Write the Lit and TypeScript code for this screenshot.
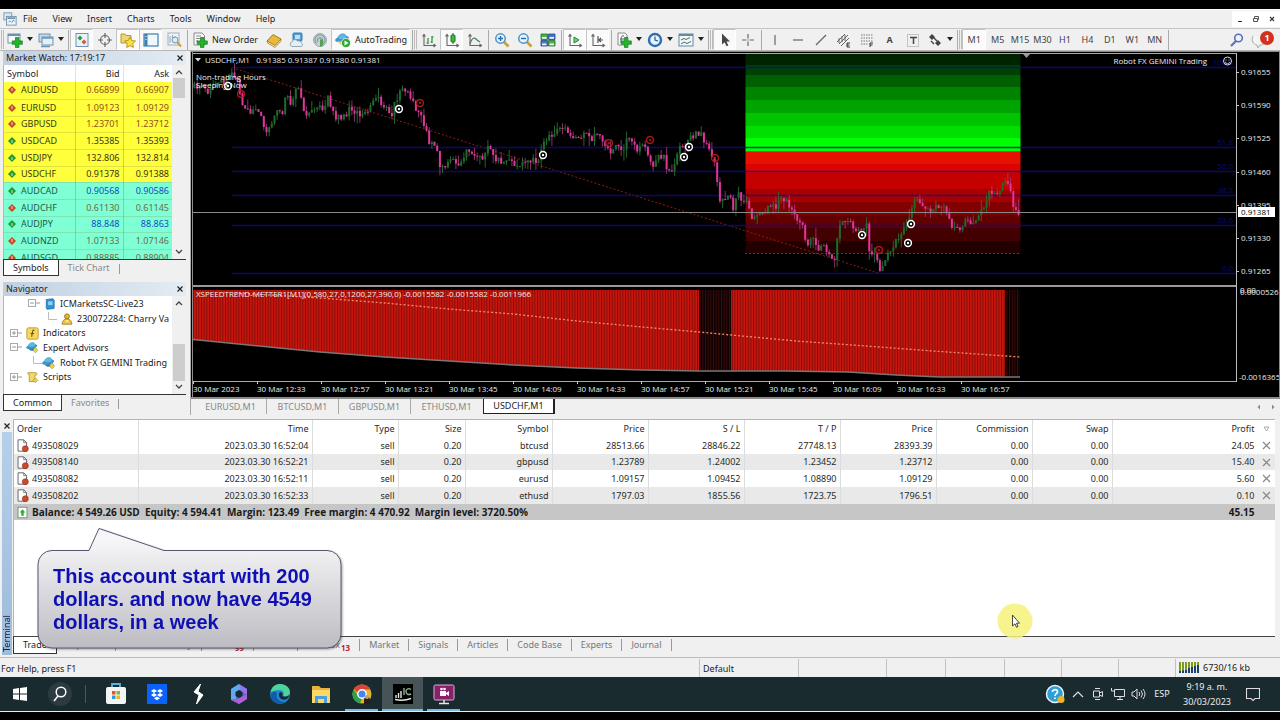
import { LitElement, html, svg, css } from "lit";
import { customElement } from "lit/decorators.js";
import { classMap } from "lit/directives/class-map.js";

const base = css`
  * { box-sizing: border-box; }
  button { font: inherit; color: inherit; background: none; border: 0; padding: 0; margin: 0; }
  svg { display: block; flex: none; }
`;

/* ---------- icons, drawn on a 16 x 16 grid ---------- */
const plus = svg`<path d="M8.5 5.5h3.4v3.4h3.4v3.4h-3.4v3.3H8.5v-3.3H5.2V8.900h3.300z" fill="#22b52b" stroke="#0c7d18" stroke-width=".7"/>`;
const axes = svg`<path d="M3 3v10.500h11M1.500 4.500 3 2.500l1.500 2M12.500 12l2 1.500-2 1.500" fill="none" stroke="#666" stroke-width="1.100"/>`;
const hat = svg`<ellipse cx="7" cy="7" rx="7" ry="2.800" transform="rotate(-12 7 7)" fill="#3c9ad0"/><path d="M3 6c0-4 7-6 8-2l.5 2c-2 2-6 2-8.500 1z" fill="#62b8e4" stroke="#2b7dae" stroke-width=".5"/><path d="M3 9c1 4 5 5 8 3l1-4c-3 2-6 2-9 1z" fill="#e8cf62"/>`;
const hatCoin = svg`<ellipse cx="7" cy="7" rx="7" ry="2.800" transform="rotate(-12 7 7)" fill="#3c9ad0"/><path d="M3 6c0-4 7-6 8-2l.5 2c-2 2-6 2-8.500 1z" fill="#62b8e4" stroke="#2b7dae" stroke-width=".5"/><path d="M3 9c1 3 4 4 7 3V8c-3 1.500-5 1.500-7 1z" fill="#3387b8"/><path d="m11.500 8 3 3.300-3 3.300-3-3.300z" fill="#ecd050" stroke="#a98b1e" stroke-width=".7"/>`;
const lens = (sign: unknown) => svg`<path d="m9.500 9.500 5 5" stroke="#c9a33a" stroke-width="2.800"/><circle cx="6.500" cy="6.500" r="4.700" fill="#e4f3fc" stroke="#4d92c8" stroke-width="1.500"/>${sign}`;

const icons: Record<string, unknown> = {
  app: svg`<rect x="1" y="1" width="9" height="8" fill="#dbe9f2" stroke="#7193ab"/><rect x="4" y="5" width="11" height="10" fill="#eef5f9" stroke="#6b8ba2"/><path d="M5 7h9" stroke="#7193ab" stroke-width="2"/><path d="m6 12 2-2 2 2 2-3 1 2" fill="none" stroke="#5b93bd"/>`,
  newChart: svg`<rect x="1" y="2" width="12" height="9" fill="#f4f9fc" stroke="#6d92ad"/><path d="M1 3h12" stroke="#6d92ad" stroke-width="2"/>${plus}`,
  profiles: svg`<rect x="1" y="2" width="11" height="8" fill="#c6dcea" stroke="#6d92ad"/><rect x="4" y="5" width="11" height="8" fill="#e4f0f7" stroke="#6d92ad"/><path d="M4 6h11M12 14.500H3" stroke="#6d92ad" stroke-width="1.500"/>`,
  market: svg`<rect x="2" y="1.500" width="12" height="13" fill="#e9f2f8" stroke="#6d92ad"/><path d="m6 3.500 2.500 2.500L6 8.500 3.500 6z" fill="#2a9b35"/><path d="M10 7.500l2.500 2.500-2.500 2.500L7.500 10z" fill="#d25a2e"/>`,
  target: svg`<circle cx="8" cy="8" r="4.500" fill="none" stroke="#666" stroke-width="1.200"/><path d="M8 1v5M8 10v5M1 8h5M10 8h5" stroke="#666" stroke-width="1.200"/>`,
  star: svg`<path d="M1 2h4l1 1.500h5V11H1z" fill="#f0d86c" stroke="#b69a35"/><path d="m10 5 1.700 3.500 3.800.5-2.800 2.600.7 3.800L10 13.600l-3.400 1.800.7-3.800L4.500 9l3.800-.5z" fill="#fbe13c" stroke="#b08d1d" stroke-width=".9"/>`,
  panel: svg`<rect x="1" y="2" width="14" height="12" fill="#f1f8fd" stroke="#3f7faf" stroke-width="1.200"/><path d="M3 2v12" stroke="#3f7faf" stroke-width="3"/><path d="M3 4v1M3 7v1" stroke="#fff"/>`,
  tester: svg`<rect x="2" y="1" width="11" height="12" fill="#eef4f8" stroke="#9bb0be"/><path d="M4 11V4M6.500 10V3M9 9V4" stroke="#89a8bc"/><circle cx="9" cy="8" r="3" fill="#d9ecf8" stroke="#7395ad"/><path d="m11 10 4 4.500" stroke="#c6a14a" stroke-width="2"/>`,
  order: svg`<path d="M2 1h8l2.500 2.500V13H2z" fill="#fafafa" stroke="#8a8a8a"/><path d="M4 4h5M4 6.500h4M4 9h2" stroke="#8a8a8a"/>${plus}`,
  book: svg`<path d="m1 9 6-6.500 8 4.500-6 7z" fill="#e9b93a" stroke="#9b6f13" stroke-width=".9"/><path d="m1 9 .5 2L9 15.500l6-6.500V7L9 13.500z" fill="#f7eac0" stroke="#9b6f13" stroke-width=".7"/>`,
  vps: svg`<rect x="4" y="1" width="9" height="8" rx="1" fill="#4f9fda" stroke="#3579ad"/><path d="M6 3h5v4H6z" fill="#bfe0f5"/><path d="M3 14.500a2.300 2.300 0 0 1 0-4.500 3 3 0 0 1 5.500-1 3 3 0 0 1 4 2 2 2 0 0 1 0 3.500z" fill="#e6eef4" stroke="#7b94a8" stroke-width=".8"/>`,
  signal: svg`<circle cx="8" cy="8" r="6.500" fill="#c9d3d6" stroke="#9aa8ad"/><path d="M4.500 11.500a5 5 0 1 1 7 0M6.200 10a2.500 2.500 0 1 1 3.600 0" fill="none" stroke="#7f9fa6" stroke-width="1.200"/><path d="M8 7.500c3-1 4.500 3 2.500 6.500L8 15z" fill="#52a356"/>`,
  auto: svg`${hat}<circle cx="11" cy="11" r="4.600" fill="#2faa32" stroke="#fff" stroke-width=".7"/><path d="m9.500 8.500 4 2.500-4 2.500z" fill="#fff"/>`,
  bars: svg`${axes}<path d="M7 6v6M5.500 11H7M11 4v7M11 5h1.500M9.500 10H11" stroke="#2b8a3a" stroke-width="1.200"/>`,
  candles: svg`${axes}<path d="M9 1v11" stroke="#186f22"/><rect x="7" y="3" width="4" height="7" rx="1" fill="#35c140" stroke="#186f22"/>`,
  line: svg`${axes}<path d="M3 12c2-7 5-7 7-4l3 2" fill="none" stroke="#557a5c" stroke-width="1.300"/>`,
  zoomIn: lens(svg`<path d="M4 6.500h5M6.500 4v5" stroke="#2c6ea8" stroke-width="1.400"/>`),
  zoomOut: lens(svg`<path d="M4 6.500h5" stroke="#2c6ea8" stroke-width="1.400"/>`),
  tile: svg`<path d="M1 2h6.500v5.500H1zM8.500 8.500H15V14H8.500z" fill="#49b04b" stroke="#28702b" stroke-width=".8"/><path d="M8.500 2H15v5.500H8.500zM1 8.500h6.500V14H1z" fill="#4377c9" stroke="#24478a" stroke-width=".8"/><path d="M2 5h4.500v1.800H2zM9.500 5H14v1.800H9.500zM2 11.500h4.500v1.800H2zM9.500 11.500H14v1.800H9.500z" fill="#f2f6fa"/>`,
  scroll: svg`${axes}<path d="m7 5 5 3-5 3z" fill="#7ad07f" stroke="#1f8b2c"/>`,
  shift: svg`${axes}<path d="M8 4v7M13 8H9M11 6 9 8l2 2" fill="none" stroke="#555" stroke-width="1.200"/>`,
  indicators: svg`<path d="M2 1h7l2 2v10H2z" fill="#fafafa" stroke="#8a8a8a"/><path d="M8 4c-3-1-3 2-3 7M4 7h4" fill="none" stroke="#557"/>${plus}`,
  clock: svg`<circle cx="8" cy="8" r="6" fill="#e8f4fd" stroke="#2b6fae" stroke-width="2.400"/><path d="M8 4.500V8l3 1" fill="none" stroke="#235a8e" stroke-width="1.200"/>`,
  template: svg`<rect x="1" y="2" width="14" height="12" fill="#f2f7fa" stroke="#5f8aa8"/><path d="M1 3h14" stroke="#5f8aa8" stroke-width="2"/><path d="m3 8 3-1.500 2 1 4-2M3 12l3-2 3 1.500 4-2" fill="none" stroke="#53695a"/>`,
  cursor: svg`<path d="M5 1.500v11l2.700-2.300 1.800 4 1.800-.8-1.800-4H13z" fill="#454545"/>`,
  cross: svg`<path d="M8 2v4.500M8 9.500V14M2 8h4.500M9.500 8H14M7.500 8h1" stroke="#666" stroke-width="1.200"/>`,
  vline: svg`<path d="M8 3v10" stroke="#666" stroke-width="1.200"/>`,
  hline: svg`<path d="M3 8h10" stroke="#666" stroke-width="1.200"/>`,
  trend: svg`<path d="m3 13 10-10" stroke="#666" stroke-width="1.200"/>`,
  channel: svg`<path d="m1 10 8-8M3 12l9-9M5 14l8-8M3 6v5M6 4v6M9 3v6" stroke="#666"/><path d="M14 11h-3v4h3M11 13h2.500" fill="none" stroke="#333"/>`,
  fibo: svg`<path d="M2 3h12M2 6h12M2 9h12M2 12h7" stroke="#777" stroke-dasharray="1.500 1"/><path d="M14 11h-3v4M11 13h2.500" fill="none" stroke="#333"/>`,
  label: svg`<rect x="2.500" y="2.500" width="11" height="12" fill="none" stroke="#999" stroke-dasharray="1 1"/><path d="M5 5.500h7M8.500 5.500V12" stroke="#444" stroke-width="1.500"/>`,
  arrows: svg`<path d="m5 2 3 3-3 3-3-3zM11 8l3 3-3 3-3-3z" fill="#444"/><path d="m4 9 3 3M6 5l4 4" stroke="#444" stroke-width="1.400"/>`,
  search: svg`<path d="m2 14 5-5" stroke="#5a6fb5" stroke-width="2.200"/><circle cx="9.500" cy="6" r="3.800" fill="#eef2ff" stroke="#5a6fb5" stroke-width="1.600"/>`,
  sheet: svg`<path d="M2.500 1h7L13 4.500V15H2.500z" fill="#fff" stroke="#666" stroke-width="1.200"/><path d="M9.500 1v3.500H13" fill="none" stroke="#666"/><circle cx="11.500" cy="12" r="3.700" fill="#cf4a2c" stroke="#8d2814" stroke-width=".7"/>`,
  deposit: svg`<rect x="2.500" y="1.500" width="11" height="13" fill="#fff" stroke="#5d8a5f"/><path d="m8 4 3.500 4h-2v4h-3V8h-2z" fill="#2eab38"/>`,
  server: svg`<path d="M3 2 12 1l1.500 2v11L4 15 3 13z" fill="#2b93d6" stroke="#1c6aa1"/><path d="M5.500 4.500h6v5h-6z" fill="#8fd0f5"/>`,
  account: svg`<circle cx="8" cy="4.500" r="3.400" fill="#e2b535" stroke="#96730f"/><path d="M1.500 15c0-5 3-7 6.500-7s6.500 2 6.500 7z" fill="#ecc548" stroke="#96730f"/><path d="M6 9.500 8 13l2-3.500" fill="#fff3c4"/>`,
  fx: svg`<rect x="1" y="1" width="14" height="14" rx="2" fill="#f6d95c" stroke="#b3922b"/><path d="M10.500 4C7.500 3 8 7 7 12M5.500 8H10" fill="none" stroke="#6e5613" stroke-width="1.400"/>`,
  expert: hatCoin,
  script: svg`<path d="M3 2h9c2 0 2 3 0 3h-1v8H4V4C2 4 1 2 3 2z" fill="#f3d968" stroke="#ae8e2b"/><path d="m11.500 8.500 3 3-3 3-3-3z" fill="#ecd050" stroke="#a98b1e" stroke-width=".8"/>`,
};
const icon = (name: string, size = 16) => html`<svg width=${size} height=${size} viewBox="0 0 16 16" aria-hidden="true">${icons[name]}</svg>`;

/* ---------- menu and toolbar ---------- */
@customElement("mt-toolbar")
class MtToolbar extends LitElement {
  static styles = [base, css`
    :host { display: block; background: #f0f0f0; }
    .menu { display: flex; align-items: center; height: 19px; padding-left: 3px; border-top: 1px solid #fff; }
    .menu nav { display: flex; gap: 15px; flex: 1; padding-left: 6px; }
    .win { display: flex; background: #fff; height: 16px; }
    .win button { width: 16px; display: grid; place-items: center; }
    .bar { display: flex; align-items: center; height: 23px; border-top: 1px solid #c6c6c6; border-bottom: 1px solid #b8b8b8; padding-left: 1px; }
    .grip { width: 3px; height: 19px; border-left: 1px solid #bbb; border-right: 1px solid #bbb; }
    .sep { width: 1px; height: 20px; margin: 0 1px 0 2px; background: #aaa; }
    .tb { width: 23px; height: 21px; display: grid; place-items: center; flex: none; }
    .on { background: #fafafa; border: 1px solid #c4c4c4; border-right-color: #fff; border-bottom-color: #fff; }
    .dd { width: 31px; height: 21px; display: flex; align-items: center; gap: 2px; padding-left: 3px; flex: none; }
    .text { height: 21px; display: flex; align-items: center; gap: 4px; padding: 0 3px; white-space: nowrap; flex: none; }
    .wide { width: 73px; }
    .auto { width: 79px; }
    .frames { display: flex; width: 204px; height: 21px; color: #444; }
    .frames button { flex: 1; }
    .letter { font-weight: 700; color: #444; }
    .push { flex: 1; }
    .alert { position: relative; width: 32px; height: 21px; }
    .badge { position: absolute; right: 6px; top: 2px; width: 14px; height: 14px; border-radius: 50%; background: #d0321f; color: #fff; font-weight: 700; line-height: 14px; text-align: center; }
  `];
  b(name: string, label: string, on = false) {
    return html`<button class=${classMap({ tb: true, on })} aria-label=${label}>${icon(name)}</button>`;
  }
  d(name: string, label: string) {
    return html`<button class="dd" aria-label=${label}>${icon(name)}<svg width="9" height="5" viewBox="0 0 9 5"><path d="M2 0h6L5 4z" fill="#222"/></svg></button>`;
  }
  render() {
    const grip = html`<span class="grip"></span>`;
    const sep = html`<span class="sep"></span>`;
    return html`
      <div class="menu">${icon("app", 14)}
        <nav>${["File", "View", "Insert", "Charts", "Tools", "Window", "Help"].map((m) => html`<button>${m}</button>`)}</nav>
        <div class="win">
          <button aria-label="Minimize"><svg width="8" height="8"><path d="M2 6.500h4" stroke="#333"/></svg></button>
          <button aria-label="Restore"><svg width="8" height="8"><path d="M2.500 3V1.500h4v3H5M1.500 3.500h4v3h-4z" fill="none" stroke="#555"/></svg></button>
          <button aria-label="Close"><svg width="8" height="8"><path d="m2 2 4 4M6 2 2 6" stroke="#333" stroke-width="1.200"/></svg></button>
        </div>
      </div>
      <div class="bar">${grip}
        ${this.d("newChart", "New chart")}${this.d("profiles", "Profiles")}${sep}
        ${this.b("market", "Market Watch", true)}${this.b("target", "Data Window")}${this.b("star", "Navigator", true)}${this.b("panel", "Terminal", true)}${this.b("tester", "Strategy Tester")}${sep}
        <button class="text wide">${icon("order")}New Order</button>
        ${this.b("book", "MetaEditor")}${this.b("vps", "Virtual hosting")}${this.b("signal", "Signals")}
        <button class="text auto on">${icon("auto")}AutoTrading</button>${sep}${grip}
        ${this.b("bars", "Bar chart")}${this.b("candles", "Candlesticks", true)}${this.b("line", "Line chart")}${sep}
        ${this.b("zoomIn", "Zoom in")}${this.b("zoomOut", "Zoom out")}${this.b("tile", "Tile windows")}${sep}
        ${this.b("scroll", "Auto scroll", true)}${this.b("shift", "Chart shift", true)}${sep}
        ${this.d("indicators", "Indicators")}${this.d("clock", "Periods")}${this.d("template", "Templates")}${sep}${grip}
        ${this.b("cursor", "Cursor", true)}${this.b("cross", "Crosshair")}${sep}
        ${this.b("vline", "Vertical line")}${this.b("hline", "Horizontal line")}${this.b("trend", "Trendline")}${this.b("channel", "Channel")}${this.b("fibo", "Fibonacci")}
        <button class="tb letter">A</button>${this.b("label", "Text label")}${this.d("arrows", "Arrows")}${sep}${grip}
        <div class="frames">${["M1", "M5", "M15", "M30", "H1", "H4", "D1", "W1", "MN"].map((f, i) => html`<button class=${i ? "" : "on"}>${f}</button>`)}</div>${sep}
        <span class="push"></span>
        ${this.b("search", "Search")}
        <button class="alert" aria-label="Notifications"><svg width="20" height="21"><path d="M5 7c-2 5 0 8 4 9l1 3 2-3c4 0 6-3 6-6" fill="#f4f4f4" stroke="#aaa"/></svg><span class="badge">1</span></button>
      </div>`;
  }
}

/* ---------- left dock ---------- */
type Quote = [string, string, string, "up" | "down", "dark" | "blue" | "brown"];
const quotes: Quote[] = [
  ["AUDUSD", "0.66899", "0.66907", "down", "brown"],
  ["EURUSD", "1.09123", "1.09129", "down", "brown"],
  ["GBPUSD", "1.23701", "1.23712", "down", "brown"],
  ["USDCAD", "1.35385", "1.35393", "up", "dark"],
  ["USDJPY", "132.806", "132.814", "up", "dark"],
  ["USDCHF", "0.91378", "0.91388", "up", "dark"],
  ["AUDCAD", "0.90568", "0.90586", "up", "blue"],
  ["AUDCHF", "0.61130", "0.61145", "down", "brown"],
  ["AUDJPY", "88.848", "88.863", "up", "blue"],
  ["AUDNZD", "1.07133", "1.07146", "down", "brown"],
  ["AUDSGD", "0.88885", "0.88904", "down", "brown"],
];
const chevron = (up: boolean) => html`<svg width="8" height="6" viewBox="0 0 8 6"><path d=${up ? "m1 5 3-3 3 3" : "m1 1 3 3 3-3"} fill="none" stroke="#444" stroke-width="1.300"/></svg>`;
const closeX = html`<svg width="6" height="6" viewBox="0 0 6 6"><path d="m.5.5 5 5M5.500.5l-5 5" stroke="#222" stroke-width="1.200"/></svg>`;

@customElement("mt-dock")
class MtDock extends LitElement {
  static styles = [base, css`
    :host { display: flex; box-sizing: border-box; flex-direction: column; width: 191px; flex: none; background: #f0f0f0; padding: 0 4px 0 3px; border-right: 1px solid #aaa; }
    .title { display: flex; align-items: center; justify-content: space-between; height: 14px; padding: 0 1px 0 3px; background: linear-gradient(90deg, #bfd0e2, #e4ecf3); white-space: nowrap; }
    .title button { display: grid; place-items: center; width: 10px; height: 12px; }
    .second { margin-top: 5px; }
    .pane { display: flex; border: 1px solid #b5b5b5; border-width: 0 0 0 1px; background: #fff; overflow: hidden; }
    .quotes { height: 194px; }
    .tree { height: 98px; }
    .body { flex: 1; min-width: 0; overflow: hidden; }
    .bar { width: 14px; background: #f0f0f0; display: flex; flex-direction: column; align-items: center; padding: 4px 0; }
    .thumb { width: 12px; background: #cdcdcd; }
    .t1 { height: 20px; margin: 3px 0 auto; }
    .t2 { height: 37px; margin: auto 0 3px; }
    table { border-collapse: collapse; table-layout: fixed; width: 100%; line-height: 14px; }
    tr { height: 17px; }
    tbody tr:nth-child(3n) { height: 16px; }
    th { font-weight: 400; border-right: 1px solid #e2e2e2; text-align: right; padding: 0 3px; }
    th:first-child { text-align: left; }
    th:last-child { border: 0; }
    td { padding: 0 3px; text-align: right; border-right: 1px solid rgba(120, 130, 60, .35); border-bottom: 1px solid rgba(120, 130, 60, .22); }
    td:first-child { text-align: left; padding-left: 4px; color: #333a10; }
    td:last-child { border-right: 0; }
    .s { width: 71px; }
    .q { width: 48px; }
    .major { background: #ffff3c; }
    .cross { background: #7fffd4; }
    .cross td:first-child { color: #1d5a48; }
    .dark { color: #3a3412; }
    .brown { color: #96501e; }
    .cross .brown { color: #6d6a4a; }
    .blue { color: #0a50c8; }
    .sym { display: flex; align-items: center; gap: 5px; }
    .tabs { display: flex; height: 18px; border-top: 1px solid #333; }
    .tab { height: 16px; padding: 0 9px; color: #888; }
    .tabs .cur { background: #fff; color: #222; border: solid #333; border-width: 0 1px 1px; }
    .mark { width: 1px; height: 10px; margin-top: 4px; background: #999; }
    ul { list-style: none; margin: 0; padding: 0; }
    .tree li { display: flex; align-items: center; height: 15px; white-space: nowrap; gap: 4px; }
    .tree li:nth-child(3n) { height: 14px; }
    .d1 { padding-left: 6px; }
    .d2 { padding-left: 24px; }
    .d3 { padding-left: 40px; }
    .leaf { padding-left: 25px; }
    .leaf svg:first-child { margin-right: -4px; }
  `];
  box(open: boolean) {
    return html`<svg width="12" height="9" viewBox="0 0 12 9"><rect x=".5" y=".5" width="7" height="7" fill="#fff" stroke="#aaa"/><path d=${open ? "M2 4h4M8 4h4" : "M2 4h4M4 2v4M8 4h4"} stroke="#999"/></svg>`;
  }
  elbow() {
    return html`<svg width="13" height="14" viewBox="0 0 13 14"><path d="M4.500 0v7.500H13" fill="none" stroke="#bbb"/></svg>`;
  }
  render() {
    return html`
      <div class="title"><span>Market Watch: 17:19:17</span><button aria-label="Close Market Watch">${closeX}</button></div>
      <div class="pane quotes">
        <div class="body"><table>
          <colgroup><col class="s"><col class="q"><col></colgroup>
          <thead><tr><th>Symbol</th><th>Bid</th><th>Ask</th></tr></thead>
          <tbody>${quotes.map(([s, b, a, dir, tone], i) => html`<tr class=${i < 6 ? "major" : "cross"}>
            <td><span class="sym"><svg width="8" height="8" viewBox="0 0 8 8"><path d="m4 0 4 4-4 4-4-4z" fill=${dir === "up" ? "#1f9a2e" : "#c9481f"}/><path d=${dir === "up" ? "M4 6V3" : "M4 2v3"} stroke="#fff" stroke-opacity=".8"/></svg>${s}</span></td>
            <td class=${tone}>${b}</td><td class=${tone}>${a}</td></tr>`)}</tbody>
        </table></div>
        <div class="bar">${chevron(true)}<div class="thumb t1"></div>${chevron(false)}</div>
      </div>
      <div class="tabs"><button class="tab cur">Symbols</button><button class="tab">Tick Chart</button><span class="mark"></span></div>
      <div class="title second"><span>Navigator</span><button aria-label="Close Navigator">${closeX}</button></div>
      <div class="pane tree">
        <div class="body"><ul>
          <li class="d2">${this.box(true)}${icon("server", 12)}ICMarketsSC-Live23</li>
          <li class="d3">${this.elbow()}${icon("account", 12)}230072284: Charry Va</li>
          <li class="d1">${this.box(false)}${icon("fx", 13)}Indicators</li>
          <li class="d1">${this.box(true)}${icon("expert", 13)}Expert Advisors</li>
          <li class="leaf">${this.elbow()}${icon("expert", 14)}Robot FX GEMINI Trading</li>
          <li class="d1">${this.box(false)}${icon("script", 13)}Scripts</li>
        </ul></div>
        <div class="bar">${chevron(true)}<div class="thumb t2"></div>${chevron(false)}</div>
      </div>
      <div class="tabs"><button class="tab cur">Common</button><button class="tab">Favorites</button><span class="mark"></span></div>`;
  }
}

/* ---------- chart window ---------- */
const OX = 193;
const OY = 52;
const path = [
  194,88,200,86,205,92,212,87,220,84,228,80,233,70,237,82,242,100,246,112,252,112,258,110,262,122,264,131,269,132,273,115,279,106,281,124,286,95,290,102,295,95,299,84,303,106,308,116,314,112,319,102,324,108,328,99,331,112,336,118,344,116,351,108,358,114,363,110,370,107,374,98,380,101,386,110,392,114,397,98,404,88,409,92,414,106,420,110,425,130,430,144,436,148,440,165,446,164,452,162,460,165,465,152,475,155,482,158,488,148,496,160,505,162,514,164,524,162,532,158,538,160,542,142,547,138,555,134,563,129,570,136,577,134,590,138,600,136,604,140,610,152,616,147,622,149,628,139,634,148,644,148,648,156,652,168,658,158,664,155,668,172,674,165,679,150,684,145,690,140,695,132,700,132,705,142,712,158,716,168,720,202,726,203,730,196,734,216,737,182,741,203,745,200,749,210,753,221,760,214,768,209,776,205,784,198,790,210,796,216,803,228,807,247,813,240,818,250,823,245,828,252,834,268,838,235,842,222,848,218,854,226,860,232,867,225,870,255,876,255,880,270,886,255,892,245,900,235,908,225,914,200,918,202,925,208,932,212,940,204,948,212,952,224,960,226,968,220,975,222,982,212,986,198,992,190,996,196,1002,186,1007,178,1010,188,1013,210,1021,212,
];
function priceAt(x: number) {
  let i = 0;
  while (i < path.length - 4 && path[i + 2] < x) i += 2;
  const t = Math.min(1, Math.max(0, (x - path[i]) / (path[i + 2] - path[i])));
  return path[i + 1] + (path[i + 3] - path[i + 1]) * t;
}
function candles() {
  let seed = 17;
  const rnd = () => (seed = (seed * 16807) % 2147483647) / 2147483647;
  let open = priceAt(194);
  let upBody = "", downBody = "", upWick = "", downWick = "";
  for (let n = 0; n < 310; n++) {
    const x = 194.500 + n * 2.667;
    const close = priceAt(x) + (rnd() - 0.5) * 8;
    const top = Math.min(open, close), h = Math.max(1, Math.abs(open - close));
    const wt = top - rnd() * rnd() * 11, wb = top + h + rnd() * rnd() * 11;
    const body = `M${(x - 1).toFixed(1)} ${top.toFixed(1)}h2v${h.toFixed(1)}h-2z`;
    const wick = `M${x.toFixed(1)} ${wt.toFixed(1)}V${wb.toFixed(1)}`;
    if (close < open) { upBody += body; upWick += wick; } else { downBody += body; downWick += wick; }
    open = close;
  }
  return svg`<path d=${upWick} stroke="#2c7a3a" stroke-width=".8"/><path d=${downWick} stroke="#a83a80" stroke-width=".8"/><path d=${upBody} fill="#1d6b2a"/><path d=${downBody} fill="#e2359c"/>`;
}
const greens = [[54, "#002400"], [65, "#004000"], [75, "#006000"], [87, "#008400"], [100, "#00a400"], [113, "#00c400"], [126, "#00e000"], [138, "#00ff00"], [151, "#3a5a20"]] as const;
const reds = [[152, "#e61200"], [164, "#dc0400"], [173, "#c40000"], [189, "#a60000"], [202, "#820000"], [215, "#600000"], [228, "#420000"], [241, "#220000"], [254, "#000"]] as const;
const bands = (list: readonly (readonly [number, string])[]) =>
  list.slice(0, -1).map(([y, c], i) => svg`<rect x="745.500" y=${y} width="275" height=${list[i + 1][0] - y} fill=${c}/>`);
const fibs: [number, string][] = [[67, "100.0"], [147, "61.8"], [171, "50.0"], [195, "38.2"], [225, "23.6"], [273, "0.0"]];
const whiteMarks = [[228, 86], [399, 109], [543, 155], [684, 157], [689, 147], [862, 235], [908, 243], [911, 224]];
const redMarks = [[241, 94], [420, 103], [609, 143], [650, 140], [715, 158], [879, 250]];
const floor = "339.500 320 352 385 357 449 361 513 365 577 368 642 370 699 371 785 371 848 372 896 375 940 377 1020 377";
const times = ["30 Mar 2023", "30 Mar 12:33", "30 Mar 12:57", "30 Mar 13:21", "30 Mar 13:45", "30 Mar 14:09", "30 Mar 14:33", "30 Mar 14:57", "30 Mar 15:21", "30 Mar 15:45", "30 Mar 16:09", "30 Mar 16:33", "30 Mar 16:57"];
const prices: [number, string][] = [[72, "0.91655"], [105, "0.91590"], [138, "0.91525"], [172, "0.91460"], [205, "0.91395"], [238, "0.91330"], [271, "0.91265"]];

@customElement("mt-chart")
class MtChart extends LitElement {
  static styles = [base, css`
    :host { display: flex; flex-direction: column; flex: 1; min-width: 0; background: #f0f0f0; }
    .frame { display: flex; background: #000; border: solid #8c8c8c; border-width: 1px 1px 2px 0; padding-left: 1px; }
    .plot { flex: 1; min-width: 0; height: 345px; border-left: 1px solid #8f8f8f; }
    .axis { width: 42px; height: 345px; }
    .frame svg { width: 100%; height: 345px; font: 8px "Open Sans", "Noto Sans", sans-serif; fill: #ececec; }
    .frame .fib { fill: #0c0c70; }
    .frame .now { fill: #000; }
    .tabs { display: flex; height: 16px; color: #888; padding-left: 4px; }
    .tab { width: 72px; margin-bottom: 1px; border-right: 1px solid #aaa; }
    .list { display: flex; flex: 1; }
    .tabs .last { border-color: transparent; }
    .tabs .cur { background: #fff; color: #222; border: solid #222; border-width: 0 2px 1px 1px; }
    .nav { display: flex; gap: 8px; align-items: center; padding-right: 4px; }
  `];
  render() {
    const area = `M193 290L193 ${floor}L1020 290z`;
    return html`
      <div class="frame">
        <div class="plot"><svg role="img" aria-label="USDCHF one minute chart">
          <defs>
            <pattern id="hist" x="193" width="2.667" height="10" patternUnits="userSpaceOnUse"><rect width="2.667" height="10" fill="#c8170f"/><rect width="1" height="10" fill="#860a04"/></pattern>
            <pattern id="dim" x="193" width="2.667" height="10" patternUnits="userSpaceOnUse"><rect width="2.667" height="10" fill="#0c0101"/><rect width="1" height="10" fill="#3c0c0a"/></pattern>
            <clipPath id="area"><path d=${area}/></clipPath>
          </defs>
          <g transform="translate(${-OX} ${-OY})">
            <path d="M193 53.500H2400" stroke="#aaa"/>
            ${bands(greens)}${bands(reds)}
            <rect x="745.500" y="151" width="275" height="1" fill="#5d7a3c"/>
            <path d="M745 253.500h275" stroke="#a01c10" stroke-dasharray="2 2"/>
            <path d="M236 69 878 273" stroke="#8c1f14" stroke-dasharray="2 2"/>
            ${fibs.map(([y]) => svg`<path d="M232 ${y}.500H2400" stroke="#0a0a90" stroke-opacity=".8" stroke-width="1.500"/>`)}
            ${candles()}
            <path d="M193 212.500H2400" stroke="#8a8a8a"/>
            ${redMarks.map(([x, y]) => svg`<circle cx=${x} cy=${y} r="3.400" fill="none" stroke="#c01818" stroke-width="1.200"/><circle cx=${x} cy=${y} r="1" fill="#c01818"/>`)}
            ${whiteMarks.map(([x, y]) => svg`<circle cx=${x} cy=${y} r="3.400" fill="#000" stroke="#fff" stroke-width="1.500"/><circle cx=${x} cy=${y} r="1.200" fill="#fff"/>`)}
            <path d="M1023 54h7l-3.500 4z" fill="#999"/>
            <rect x="193" y="285" width="100%" height="2" fill="#9a9a9a"/>
            <g clip-path="url(#area)">
              <rect x="193" y="290" width="813" height="90" fill="url(#hist)"/>
              <rect x="699" y="290" width="32" height="90" fill="#000"/><rect x="699" y="290" width="32" height="90" fill="url(#dim)"/>
              <rect x="1005" y="290" width="15" height="90" fill="url(#dim)"/>
            </g>
            <path d="M193 ${floor}" fill="none" stroke="#7d7474" stroke-width="1.500"/>
            <path d="M236 293 320 298 385 303 449 309 513 314 577 321 642 327 699 332 731 335 796 341 866 346 933 351 1020 357" fill="none" stroke="#f08c6c" stroke-width="1.300" stroke-dasharray="2 2"/>
            <path d="M193 381.500H2400" stroke="#aaa"/>
            ${times.map((t, i) => svg`<path d="M${193.500 + i * 64} 381v3" stroke="#ccc"/><text x=${193 + i * 64} y="392">${t}</text>`)}
            <path d="M195 58h6l-3 3.500z" fill="#ddd"/>
            <text x="205" y="63">USDCHF,M1&#160;&#160; 0.91385 0.91387 0.91380 0.91381</text>
            <text x="196" y="80">Non-trading Hours</text>
            <text x="196" y="88">Sleeping Now</text>
            <text x="196" y="297">XSPEEDTREND-METTER1[M1](0,580,27,0,1200,27,390,0) -0.0015582 -0.0015582 -0.0011966</text>
          </g>
          <svg x="100%" overflow="visible">
            <g transform="translate(-1 ${-OY})">
              <path d="M0.500 53V382" stroke="#bbb"/>
              ${fibs.map(([y, t]) => svg`<text class="fib" x="-3" y=${y - 2} text-anchor="end">${t}</text>`)}
              <text x="-29" y="64" text-anchor="end">Robot FX GEMINI Trading</text>
              <circle cx="-8.500" cy="61" r="4" fill="none" stroke="#ddd"/><path d="M-11 62.500q2.500 2.500 5 0M-10 59.500v1M-7 59.500v1" fill="none" stroke="#ddd" stroke-width=".9"/>
            </g>
          </svg>
        </svg></div>
        <div class="axis"><svg>
          <g transform="translate(0 ${-OY})">
            ${prices.map(([y, t]) => svg`<path d="M0 ${y}.500h2" stroke="#ccc"/><text x="4" y=${y + 3}>${t}</text>`)}
            <rect x="1" y="207" width="37" height="10" fill="#fff"/><text class="now" x="4" y="215">0.91381</text>
            <text x="3" y="293">0.00</text><text x="3" y="295">0.0000526</text><text x="2" y="380">-0.0016365</text>
          </g>
        </svg></div>
      </div>
      <div class="tabs">
        <div class="list">
          ${["EURUSD,M1", "BTCUSD,M1", "GBPUSD,M1", "ETHUSD,M1"].map((t, i) => html`<button class=${classMap({ tab: true, last: i === 3 })}>${t}</button>`)}
          <button class="tab cur">USDCHF,M1</button>
        </div>
        <div class="nav"><svg width="6" height="6"><path d="M4 .5 1.500 3 4 5.500z" fill="#888"/></svg><svg width="6" height="6"><path d="M2 .5 4.500 3 2 5.500z" fill="#888"/></svg></div>
      </div>`;
  }
}

/* ---------- terminal ---------- */
const orders = [
  ["493508029", "2023.03.30 16:52:04", "sell", "0.20", "btcusd", "28513.66", "28846.22", "27748.13", "28393.39", "0.00", "0.00", "24.05"],
  ["493508140", "2023.03.30 16:52:21", "sell", "0.20", "gbpusd", "1.23789", "1.24002", "1.23452", "1.23712", "0.00", "0.00", "15.40"],
  ["493508082", "2023.03.30 16:52:11", "sell", "0.20", "eurusd", "1.09157", "1.09452", "1.08890", "1.09129", "0.00", "0.00", "5.60"],
  ["493508202", "2023.03.30 16:52:33", "sell", "0.20", "ethusd", "1797.03", "1855.56", "1723.75", "1796.51", "0.00", "0.00", "0.10"],
];
const heads = ["Order", "Time", "Type", "Size", "Symbol", "Price", "S / L", "T / P", "Price", "Commission", "Swap", "Profit"];
const summary = ["Balance: 4 549.26 USD", "Equity: 4 594.41", "Margin: 123.49", "Free margin: 4 470.92", "Margin level: 3720.50%"].join("\u00a0 ");

@customElement("mt-terminal")
class MtTerminal extends LitElement {
  static styles = [base, css`
    :host { display: flex; box-sizing: border-box; position: relative; flex: 1; min-height: 0; background: #f0f0f0; padding: 1px 5px 2px 0; border-bottom: 1px solid #bbb; }
    .side { width: 13px; padding: 3px 1px 0 2px; display: flex; flex-direction: column; align-items: center; gap: 2px; }
    .side button { width: 10px; height: 8px; display: grid; place-items: center; }
    .strip { flex: 1; width: 10px; background: linear-gradient(#9dbcdb, #b4d0ea); display: flex; align-items: center; justify-content: flex-start; writing-mode: vertical-rl; transform: rotate(180deg); line-height: 10px; padding-top: 3px; color: #223; }
    .main { flex: 1; min-width: 0; display: flex; flex-direction: column; }
    .list { flex: 1; background: #fff; border: solid #b5b5b5; border-width: 1px 0 0 1px; }
    table { width: 100%; border-collapse: collapse; table-layout: fixed; line-height: 14px; color: #2a2a2a; }
    tr { height: 17px; }
    tbody tr:nth-child(3n + 2) { height: 16px; }
    th { font-weight: 400; }
    th, td { text-align: right; padding: 0 3px; border-right: 1px solid #dcdcdc; white-space: nowrap; }
    th:first-child, td:first-child { text-align: left; }
    th:nth-last-child(-n + 2), td:nth-last-child(-n + 2) { border-right: 0; }
    tbody td:first-child { padding-left: 2px; }
    tbody tr:nth-child(even) { background: #e9e9e9; }
    tbody .sum { background: #c6c6c6; font: 700 10px/14px "Open Sans", sans-serif; color: #1a1a1a; }
    .sum td { border: 0; }
    .cell { display: flex; align-items: center; gap: 3px; }
    .w125 { width: 124px; } .w174 { width: 174px; } .w86 { width: 86px; } .w67 { width: 67px; } .w87 { width: 87px; } .w96 { width: 96px; } .w80 { width: 80px; } .w17 { width: 17px; }
    .x { padding: 0 4px; }
    .x button { display: block; margin: auto; }
    .x svg { margin: auto; }
    .tabs { display: flex; height: 19px; border-top: 1px solid #444; color: #777; }
    .tab { display: flex; align-items: center; padding: 0 9px; height: 16px; white-space: nowrap; border-left: 1px solid transparent; border-image: linear-gradient(transparent 15%, #999 15%, #999 85%, transparent 85%) 1; border-width: 0 0 0 1px; }
    .tabs .cur { background: #fff; color: #222; border: solid #333; border-width: 0 1px 1px; border-image: none; height: 17px; }
    .cur + .tab { border-image: none; }
    .end { width: 1px; height: 12px; margin-top: 2px; background: #999; }
    .n { color: #c01f2b; font-size: 8px; padding: 5px 0 0 1px; font-weight: 700; }
    .callout { position: absolute; left: 37px; bottom: 8px; width: 305px; filter: drop-shadow(1px 1px 1px rgba(0, 0, 0, .35)); }
    .callout p { position: absolute; inset: 37px 14px auto 16px; margin: 0; font: 700 20px/23px "Liberation Sans", Arial, sans-serif; color: #0f10b4; }
    .halo { position: absolute; right: 246px; bottom: 17px; }
  `];
  render() {
    const cols = ["w125", "w174", "w86", "w67", "w87", "w96", "w96", "w96", "w96", "w96", "w80", "", "w17"];
    return html`
      <div class="side"><button aria-label="Close Terminal">${closeX}</button><div class="strip">Terminal</div></div>
      <div class="main">
        <div class="list"><table>
          <colgroup>${cols.map((c) => html`<col class=${c}>`)}</colgroup>
          <thead><tr>${heads.map((h) => html`<th>${h}</th>`)}<th class="x"><svg width="7" height="6"><path d="M1 1h5L3.500 5z" fill="none" stroke="#999" stroke-width=".8"/></svg></th></tr></thead>
          <tbody>
            ${orders.map(([id, ...rest]) => html`<tr><td><span class="cell">${icon("sheet", 13)}${id}</span></td>${rest.map((v) => html`<td>${v}</td>`)}
              <td class="x"><button aria-label="Close order ${id}"><svg width="9" height="9"><path d="m1 1 7 7M8 1 1 8" stroke="#888" stroke-width="1.200"/></svg></button></td></tr>`)}
            <tr class="sum"><td colspan="11"><span class="cell">${icon("deposit", 13)}${summary}</span></td><td>45.15</td><td></td></tr>
          </tbody>
        </table></div>
        <div class="tabs">
          <button class="tab cur">Trade</button>
          <button class="tab">Exposure</button>
          <button class="tab">Account History</button>
          <button class="tab">News<span class="n">99</span></button>
          <button class="tab">Alerts</button>
          <button class="tab">Mailbox<span class="n">13</span></button>
          ${["Market", "Signals", "Articles", "Code Base", "Experts", "Journal"].map((t) => html`<button class="tab">${t}</button>`)}
          <span class="end"></span>
        </div>
      </div>
      <div class="callout">
        <svg width="305" height="121" viewBox="0 0 305 121">
          <defs><linearGradient id="g" x2="0" y2="1"><stop offset=".1" stop-color="#f6f6f8"/><stop offset="1" stop-color="#bcbcc2"/></linearGradient></defs>
          <path d="M15 22.500H52L62 .5 127 22.500H290a14 14 0 0 1 14 14V106a14 14 0 0 1-14 14H15a14 14 0 0 1-14-14V36.500a14 14 0 0 1 14-14z" fill="url(#g)" stroke="#555a70"/>
        </svg>
        <p>This account start with 200 dollars. and now have 4549 dollars, in a week</p>
      </div>
      <svg class="halo" width="38" height="38" viewBox="0 0 38 38"><circle cx="19" cy="19" r="17.500" fill="#f6f27a" fill-opacity=".85"/><path d="M16.500 13v11l2.500-2.200 1.500 3.500 1.500-.7-1.500-3.400h3z" fill="#fff" stroke="#333" stroke-width=".9"/></svg>`;
  }
}

/* ---------- Windows taskbar ---------- */
const apps: [string, unknown, string][] = [
  ["Microsoft Store", svg`<path d="M9 7V3h8v4" fill="none" stroke="#58b0e0" stroke-width="1.800"/><rect x="3" y="6" width="20" height="17" rx="2" fill="#f4f4f4"/><path d="M9 10h3.500v3.500H9z" fill="#e8532c"/><path d="M13.500 10H17v3.500h-3.500z" fill="#7eb83b"/><path d="M9 14.500h3.500V18H9z" fill="#2a9ddf"/><path d="M13.500 14.500H17V18h-3.500z" fill="#f3b51f"/>`, ""],
  ["Dropbox", svg`<rect x="3" y="3" width="20" height="20" fill="#0a62fb"/><path d="m10 8 3 2-3 2-3-2zM16 8l3 2-3 2-3-2zM10 12l3 2-3 2-3-2zM16 12l3 2-3 2-3-2zM13 15.500l3 1.700-3 2-3-2z" fill="#fff"/>`, ""],
  ["Strategy", svg`<path d="M15.500 3 9 11l5 3-2.500 9L18 14l-5-3.500z" fill="#fff" stroke="#fff" stroke-linejoin="round"/>`, ""],
  ["Microsoft 365", svg`<path d="m13 3 8 5v10l-8 5-8-5V8z" fill="#4a6fd8"/><path d="m13 3 8 5v5l-6-2-2-8z" fill="#9a6fe8"/><path d="m5 8 8-5 2 5-5 3v7l-5 1z" fill="#5fa9ee"/><path d="m21 13v5l-8 5-8-4 7-1z" fill="#b05fd0"/><path d="m13 9 3.500 2v4L13 17l-3.500-2v-4z" fill="#1b2a2e"/>`, ""],
  ["Edge", svg`<circle cx="13" cy="13" r="10" fill="#1d87d6"/><path d="M3.500 11C5 5 9 3 13 3c6 0 10 4 10 8 0 3-3 5-7 4 2-3 0-6-4-6-3 0-6 1-8.500 2z" fill="#4fd39a"/><path d="M10 12c-2 6 3 9 8 9-5 4-14 1-14.500-7C5 10 9 10 10 12z" fill="#125ba8"/><path d="M12.500 11.500c2-1 4 1 3 3.500 2 1.500 5 .5 7-1-1 4-4 5.500-7 4.500-3-1-4.500-4-3-7z" fill="#1a2b2f"/>`, ""],
  ["File Explorer", svg`<path d="M4 5h7l2 2h9v15H4z" fill="#e9b23a"/><path d="M4 9h18v13H4z" fill="#fbd767"/><path d="M7 22v-7h12v7h-3v-4h-6v4z" fill="#4a9fdc"/>`, ""],
  ["Chrome", svg`<circle cx="13" cy="13" r="9.500" fill="#e3b52a"/><path d="M13 3.500a9.500 9.500 0 0 1 8.500 5H13L9 12 5 8a9.500 9.500 0 0 1 8-4.500z" fill="#db4437"/><path d="M4.700 8.300 9 15l4 2.500-2 5A9.500 9.500 0 0 1 4.700 8.300z" fill="#2da14c"/><circle cx="13" cy="13" r="4.200" fill="#4285f4" stroke="#fff" stroke-width="1.400"/><path d="M15 23v-4a3 3 0 1 1 6 0v4z" fill="#2a1e18"/><circle cx="18" cy="16" r="2" fill="#c99a72"/>`, "run"],
  ["IC Markets", svg`<rect x="3" y="3" width="20" height="20" fill="#000"/><path d="M6 17v-3M8.500 17v-5M11 17v-7M5 18.500c5 1 11 1 16-1" fill="none" stroke="#dfe6df" stroke-width="1.400"/><path d="M14 7v7M21 8.500c-3-2-5 0-5 2s2 4 5 2.500" fill="none" stroke="#8fb58f" stroke-width="1.400"/>`, "active"],
  ["Recorder", svg`<rect x="3" y="4" width="20" height="15" rx="1.500" fill="#8a1f6b" stroke="#d7b7cf"/><path d="M9 10h6v5H9zM15 12l3-2v5l-3-2z" fill="#fff"/><circle cx="10.500" cy="8" r="1.300" fill="#fff"/><circle cx="13.500" cy="8" r="1.300" fill="#fff"/><path d="M13 19v3M8 22.500h10" stroke="#e8e8e8" stroke-width="1.500"/>`, "run"],
];

@customElement("win-taskbar")
class WinTaskbar extends LitElement {
  static styles = [base, css`
    :host { display: flex; box-sizing: border-box; height: 35px; background: #1a2b2f; color: #eee; border-bottom: 1px solid #e8eeee; align-items: stretch; }
    button { display: grid; place-items: center; }
    .apps { display: flex; }
    .start, .find { width: 40px; }
    .sep { width: 1px; margin: 8px 9px 8px 5px; background: #4a595d; }
    .app { width: 41px; }
    .app.run { box-shadow: inset 0 -2px #7fb6dc; width: 33px; margin: 0 4px; }
    .active { background: #465458; box-shadow: inset 0 -2px #7fb6dc; }
    .grow { flex: 1; }
    .tray { display: flex; align-items: center; }
    .tray button { width: 20px; }
    .tray .lang { width: 28px; }
    .tray .clock { display: block; width: 62px; line-height: 15px; text-align: center; }
    .tray .note { width: 30px; margin: 0 12px 0 0; }
    .tray .help { width: 26px; }
  `];
  render() {
    return html`
      <button class="start" aria-label="Start"><svg width="14" height="14"><path d="m0 2 6-.9v5.400H0zM7 1l7-1v6.500H7zM0 7.500h6v5.400L0 12zM7 7.500h7V14l-7-1z" fill="#fff"/></svg></button>
      <button class="find" aria-label="Search"><svg width="26" height="26"><circle cx="13" cy="13" r="12" fill="#2c3b3f"/><circle cx="14" cy="11" r="4.800" fill="none" stroke="#fff" stroke-width="1.500"/><path d="m11 15-4 5" stroke="#fff" stroke-width="1.500"/></svg></button>
      <span class="sep"></span>
      <div class="apps">${apps.map(([name, g, state]) => html`<button class="app ${state}" aria-label=${name}><svg width="26" height="26">${g}</svg></button>`)}</div>
      <span class="grow"></span>
      <div class="tray">
        <button class="help" aria-label="Help"><svg width="20" height="20"><circle cx="10" cy="10" r="8.500" fill="#2a9fd8" stroke="#e8f6fc" stroke-width="1.500"/><path d="M7.500 8c0-3.500 5.500-3 5 0-.3 1.800-2.500 1.800-2.500 4M10 13.500v1.600" fill="none" stroke="#fff" stroke-width="1.700"/><circle cx="16" cy="15.500" r="3.500" fill="#f0b429"/></svg></button>
        <button aria-label="Show hidden icons"><svg width="12" height="8"><path d="m1 7 5-5 5 5" fill="none" stroke="#e0e0e0" stroke-width="1.200"/></svg></button>
        <button aria-label="Camera"><svg width="12" height="14"><path d="M1.500 4h6v6h-6zM7.500 6l3-1.500v5l-3-1.500M3 1.500h5M3 12.500h5" fill="none" stroke="#ddd"/></svg></button>
        <button aria-label="Network"><svg width="15" height="14"><path d="M3.500 2.500h10v7h-10zM6 12.500h6M9 10v2M.5 1v3h3" fill="none" stroke="#ddd"/></svg></button>
        <button aria-label="Volume"><svg width="15" height="12"><path d="M1 4h2l3-3v10L3 8H1zM8 4q1.500 2 0 4M10 2.500q3 3.500 0 7M12 1q4 5 0 10" fill="none" stroke="#ddd"/></svg></button>
        <button class="lang">ESP</button>
        <button class="clock">9:19 a. m.<br>30/03/2023</button>
        <button class="note" aria-label="Action center"><svg width="14" height="15"><path d="M.5 1.500h13v10H9L7 13.500 5 11.500H.5z" fill="none" stroke="#ddd" stroke-width="1.100"/></svg></button>
      </div>`;
  }
}

@customElement("app-root")
class AppRoot extends LitElement {
  static styles = [base, css`
    :host { display: flex; box-sizing: border-box; flex-direction: column; min-height: 100vh; background: #000; padding: 9px 0 8px; font: 9px/14px "Noto Sans", "Open Sans", sans-serif; color: #222; overflow: hidden; }
    .work { display: flex; background: #f0f0f0; padding-bottom: 3px; }
    .status { display: flex; align-items: center; height: 19px; background: #f0f0f0; }
    .status > span { height: 18px; line-height: 20px; border-left: 1px solid #c2c2c2; padding-left: 3px; }
    .status .tip { flex: 1; border: 0; padding-left: 1px; }
    .a { width: 99px; } .b { width: 88px; } .c { width: 59px; } .d { width: 57px; }
    .status .net { display: flex; align-items: center; gap: 3px; width: 105px; }
  `];
  render() {
    return html`
      <mt-toolbar></mt-toolbar>
      <div class="work"><mt-dock></mt-dock><mt-chart></mt-chart></div>
      <mt-terminal></mt-terminal>
      <div class="status">
        <span class="tip">For Help, press F1</span>
        <span class="a">Default</span><span class="b"></span><span class="c"></span><span class="c"></span><span class="d"></span><span class="d"></span><span class="d"></span>
        <span class="net"><svg width="21" height="11"><path d="M1 0v11M4 0v11M7 0v11M10 0v11M13 0v11M16 0v11M19 0v11" stroke="#7d9a1e" stroke-width="2"/><path d="M1 9v2M4 8.500V11M7 8v3M10 6v5M13 5v6M16 4v7M19 3v8" stroke="#1d3d6b" stroke-width="2"/></svg>6730/16 kb</span>
      </div>
      <win-taskbar></win-taskbar>`;
  }
}
